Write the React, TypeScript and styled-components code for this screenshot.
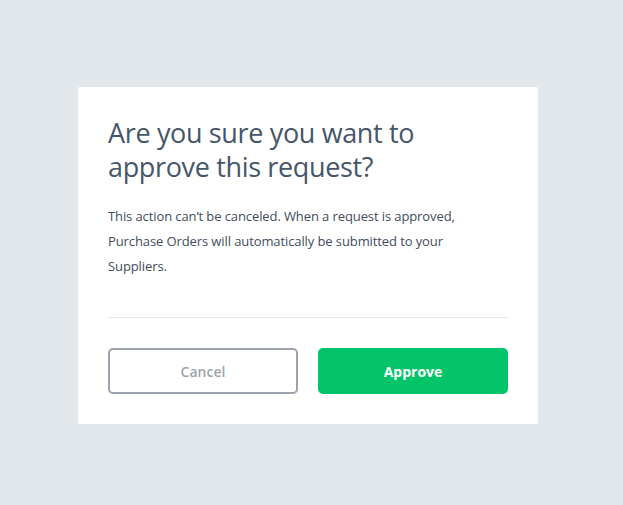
import React from "react";
import styled, { createGlobalStyle } from "styled-components";

const Global = createGlobalStyle`
  html, body { margin: 0; padding: 0; background: #e2e7eb; }
  body { font-family: "Open Sans", "Liberation Sans", sans-serif; }
  * { box-sizing: border-box; }
`;

const Page = styled.div`
  min-height: 505px;
  padding: 87px 0 0 78px;
`;

const Card = styled.div`
  width: 460px;
  background: #ffffff;
  border-radius: 2px;
  padding: 29px 30px 30px;
  display: flex;
  flex-direction: column;
`;

const Title = styled.h1`
  margin: 0;
  font-size: 27px;
  font-weight: 400;
  line-height: 34px;
  color: #46566a;
  letter-spacing: -0.35px;
`;

const Body = styled.p`
  margin: 20px 0 0;
  max-width: 370px;
  font-size: 13px;
  line-height: 25px;
  color: #3f4c5c;
  letter-spacing: -0.1px;
`;

const Divider = styled.hr`
  margin: 38px 0 0;
  border: none;
  border-top: 1px solid #e4e7ea;
  height: 0;
`;

const Actions = styled.div`
  margin-top: 30px;
  display: grid;
  grid-template-columns: 1fr 1fr;
  gap: 20px;
`;

const Button = styled.button<{ $primary?: boolean }>`
  height: 46px;
  border-radius: 5px;
  font-family: inherit;
  font-size: 14px;
  font-weight: ${(p) => (p.$primary ? 700 : 600)};
  cursor: pointer;
  border: 2px solid ${(p) => (p.$primary ? "#04c46a" : "#9ba4ae")};
  background: ${(p) => (p.$primary ? "#04c46a" : "#ffffff")};
  color: ${(p) => (p.$primary ? "#ffffff" : "#9ba4ae")};
`;

export default function App() {
  return (
    <>
      <Global />
      <Page>
        <Card>
          <Title>Are you sure you want to approve this request?</Title>
          <Body>
            This action can’t be canceled. When a request is approved, Purchase
            Orders will automatically be submitted to your Suppliers.
          </Body>
          <Divider />
          <Actions>
            <Button>Cancel</Button>
            <Button $primary>Approve</Button>
          </Actions>
        </Card>
      </Page>
    </>
  );
}
